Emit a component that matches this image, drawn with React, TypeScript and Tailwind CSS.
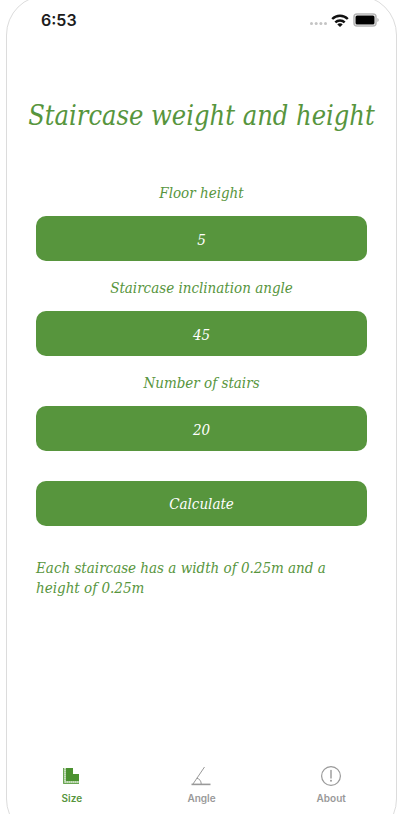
import * as React from 'react';

interface FieldProps {
    id: string;
    label: string;
    value: string;
    onChange: (value: string) => void;
}

function Field({ id, label, value, onChange }: FieldProps) {
    return (
        <div className="flex flex-col gap-[10px]">
            <label htmlFor={id} className="text-center text-[15px] leading-[26px] text-[#57953d]">
                {label}
            </label>
            <input
                id={id}
                type="text"
                inputMode="decimal"
                value={value}
                onChange={e => onChange(e.target.value)}
                className="h-[45px] w-full rounded-[10px] bg-[#57953d] pt-0.5 text-center text-[15px] text-white italic outline-none"
            />
        </div>
    );
}

function StatusBar() {
    return (
        <header className="flex h-6 items-center justify-between pl-[34px] pr-[17px] font-['Inter','Liberation_Sans',sans-serif]">
            <span className="text-base font-semibold text-[#1c1c1c]">6:53</span>
            <div className="flex items-center gap-1">
                <svg width="18" height="12" viewBox="0 0 18 12" fill="#c4c4c4" aria-hidden="true">
                    <circle cx="2.500" cy="9.500" r="1.500" />
                    <circle cx="7.200" cy="9.500" r="1.500" />
                    <circle cx="11.900" cy="9.500" r="1.500" />
                    <circle cx="16.500" cy="9.500" r="1.500" />
                </svg>
                <svg width="18" height="13" viewBox="0 0 18 13" fill="none" stroke="#111" strokeWidth="2.4" aria-hidden="true">
                    <path d="M1.2 5a11 11 0 0 1 15.6 0" />
                    <path d="M4.3 8.4a6.7 6.7 0 0 1 9.4 0" />
                    <path d="M9 12.9 6.3 10.4a3.6 3.6 0 0 1 5.4 0Z" fill="#111" stroke="none" />
                </svg>
                <svg width="26" height="14" viewBox="0 0 26 14" aria-hidden="true">
                    <rect x="1" y="1" width="22" height="12" rx="3" fill="none" stroke="#b5b5b5" strokeWidth="1.500" />
                    <rect x="2.500" y="2.500" width="19" height="9" rx="1.500" fill="#000" />
                    <path d="M24.500 5v4c1.400-.6 1.400-3.400 0-4Z" fill="#999" />
                </svg>
            </div>
        </header>
    );
}

function SizeIcon() {
    return (
        <svg width="20" height="20" viewBox="0 0 20 20" aria-hidden="true">
            <path d="M1 2h10v6h6v10H1Z" fill="#a9cb9b" />
            <path d="M4 2H11v6h6v7H4Z" fill="#4b9130" />
            <path d="M1.500 2v15.500H17" fill="none" stroke="#6aa653" />
            <path d="M3 2v14H17" fill="none" stroke="#e4f0df" strokeDasharray="1 1" />
        </svg>
    );
}

function AngleIcon() {
    return (
        <svg width="20" height="20" viewBox="0 0 20 20" fill="none" stroke="#999" aria-hidden="true">
            <path d="M0.500 18.400H19.500" strokeWidth="1.600" />
            <path d="M2 18 13.500 1" />
            <path d="M5.800 12.200a6 6 0 0 1 4.400 5.800" />
        </svg>
    );
}

function AboutIcon() {
    return (
        <svg width="22" height="20" viewBox="0 0 22 20" fill="none" stroke="#999" aria-hidden="true">
            <circle cx="11" cy="10" r="9.400" strokeWidth="1.200" />
            <path d="M11 4.500v7.500" strokeWidth="1.400" strokeLinecap="round" />
            <circle cx="11" cy="14.800" r="1" fill="#999" stroke="none" />
        </svg>
    );
}

const tabs = [
    { name: 'Size', icon: <SizeIcon /> },
    { name: 'Angle', icon: <AngleIcon /> },
    { name: 'About', icon: <AboutIcon /> },
];

export default function App() {
    const [floorHeight, setFloorHeight] = React.useState('5');
    const [angle, setAngle] = React.useState('45');
    const [stairs, setStairs] = React.useState('20');
    const [size, setSize] = React.useState('0.25');
    const [activeTab, setActiveTab] = React.useState('Size');

    const calculate = (e: React.FormEvent) => {
        e.preventDefault();
        setSize((Number(floorHeight) / Number(stairs)).toFixed(2));
    };

    return (
        <div className="flex min-h-screen overflow-hidden bg-white">
            {/* Phone frame, runs past the top and bottom edges */}
            <div className="-mt-[5px] -mb-[25px] ml-[6px] mr-[3px] flex flex-1 flex-col rounded-[40px] border border-[#dcdcdc] pt-3 pb-8">
                <StatusBar />

                <main className="flex flex-1 flex-col px-[29px] font-['DejaVu_Serif_Condensed','DejaVu_Serif',serif] italic">
                    <h1 className="-mx-4 mt-16 text-center text-[27px] leading-10 whitespace-nowrap text-[#57953d]">
                        Staircase weight and height
                    </h1>

                    <form onSubmit={calculate} className="mt-11 flex flex-col gap-[14px]">
                        <Field id="floor-height" label="Floor height" value={floorHeight} onChange={setFloorHeight} />
                        <Field id="angle" label="Staircase inclination angle" value={angle} onChange={setAngle} />
                        <Field id="stairs" label="Number of stairs" value={stairs} onChange={setStairs} />
                        <button
                            type="submit"
                            className="mt-4 h-[45px] w-full rounded-[10px] bg-[#57953d] pt-0.5 text-[15px] text-white italic"
                        >
                            Calculate
                        </button>
                    </form>

                    <p className="mt-8 text-[15px] leading-5 text-[#57953d]">
                        {`Each staircase has a width of ${size}m and a height of ${size}m`}
                    </p>
                </main>

                <nav className="grid grid-cols-3 font-['Inter','Liberation_Sans',sans-serif]">
                    {tabs.map(tab => (
                        <button
                            key={tab.name}
                            type="button"
                            onClick={() => setActiveTab(tab.name)}
                            className={`flex flex-col items-center gap-1 text-[10px] leading-4 font-semibold ${
                                activeTab === tab.name ? 'text-[#57953d]' : 'text-[#999]'
                            }`}
                        >
                            {tab.icon}
                            {tab.name}
                        </button>
                    ))}
                </nav>
            </div>
        </div>
    );
}
